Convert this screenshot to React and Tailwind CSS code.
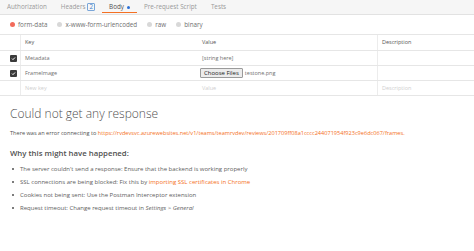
import React from "react";

const tabs = [
  { label: "Authorization" },
  { label: "Headers", count: "2" },
  { label: "Body", active: true },
  { label: "Pre-request Script" },
  { label: "Tests" },
];

const modes = ["form-data", "x-www-form-urlencoded", "raw", "binary"];

function Checkbox() {
  return (
    <span className="w-[7px] h-[7px] rounded-[1px] bg-[#3b3b3b] flex items-center justify-center">
      <svg viewBox="0 0 10 10" className="w-[5px] h-[5px]" fill="none" stroke="white" strokeWidth="2">
        <path d="M2 5.2l2 2L8 3" />
      </svg>
    </span>
  );
}

function Bullet({ children }) {
  return (
    <li className="flex items-center gap-[6px] leading-[8px]">
      <span className="w-[2px] h-[2px] rounded-full bg-[#505050] ml-[2px]" />
      <span>{children}</span>
    </li>
  );
}

export default function App() {
  const url =
    "https://rvdevsvc.azurewebsites.net/v1/teams/teamrvdev/reviews/201709ff08a1cccc244071954f923c9e6dc067/frames.";

  return (
    <div className="w-[474px] h-[251px] bg-white overflow-hidden text-[#505050]" style={{ fontFamily: '"Open Sans", sans-serif' }}>
      {/* tabs */}
      <div className="h-[15px] bg-[#f6f6f6] border-b border-[#e2e2e2] flex items-stretch pl-[7px] gap-[14px] text-[6.3px] text-[#9a9a9a]">
        {tabs.map((t) => (
          <div
            key={t.label}
            className={`relative flex items-center ${t.active ? "text-[#505050] px-[7px] -mx-[7px]" : ""}`}
          >
            {t.label}
            {t.count && (
              <span className="ml-[2px] px-[1px] border border-[#7aa6d9] rounded-[1px] text-[#3d7fc9] leading-none">{t.count}</span>
            )}
            {t.active && <span className="ml-[3px] w-[3px] h-[3px] rounded-full bg-[#2a6fd6]" />}
            {t.active && <span className="absolute left-0 right-0 bottom-[1px] h-[1.5px] bg-[#f47023]" />}
          </div>
        ))}
      </div>

      {/* body modes */}
      <div className="h-[20px] border-b border-[#e6e6e6] flex items-center pl-[10px] gap-[10px] text-[6.3px] text-[#707070]">
        {modes.map((m, i) => (
          <label key={m} className="flex items-center gap-[3px]">
            <span className={`w-[5px] h-[5px] rounded-full ${i === 0 ? "bg-[#f26b5b]" : "bg-[#d8d8d8]"}`} />
            {m}
          </label>
        ))}
      </div>

      {/* table */}
      <div className="text-[5.5px] text-[#707070]">
        <div className="grid grid-cols-[20px_178px_179px_1fr] h-[16px] border-b border-[#e6e6e6] items-center">
          <div />
          <div className="pl-[4px] border-l border-[#ececec] h-full flex items-center text-[#555]">Key</div>
          <div className="pl-[4px] h-full flex items-center text-[#555]">Value</div>
          <div className="pl-[4px] border-l border-[#ececec] h-full flex items-center text-[#555]">Description</div>
        </div>
        {[
          { k: "Metadata", v: "[string here]", check: true },
          { k: "FrameImage", file: true, check: true },
          { k: "New key", v: "Value", d: "Description", ph: true },
        ].map((r) => (
          <div key={r.k} className="grid grid-cols-[20px_178px_179px_1fr] h-[15px] border-b border-[#e6e6e6] items-center">
            <div className="flex justify-end pr-[3px]">{r.check && <Checkbox />}</div>
            <div className={`pl-[4px] border-l border-[#ececec] h-full flex items-center ${r.ph ? "text-[#cfcfcf]" : ""}`}>{r.k}</div>
            <div className={`pl-[2px] h-full flex items-center ${r.ph ? "text-[#cfcfcf]" : ""}`}>
              {r.file ? (
                <>
                  <span className="h-[10px] px-[3px] flex items-center border border-[#9a9a9a] rounded-[1px] bg-[#ececec] text-[#222] text-[6px]">
                    Choose Files
                  </span>
                  <span className="ml-[2px]">testone.png</span>
                </>
              ) : (
                <span className="pl-[2px]">{r.v}</span>
              )}
            </div>
            <div className="pl-[4px] border-l border-[#ececec] h-full flex items-center text-[#cfcfcf]">{r.d}</div>
          </div>
        ))}
      </div>

      {/* response error */}
      <div className="pl-[10px] pt-[10px]">
        <h1 className="text-[12px] font-light text-[#505050] leading-[16px]">Could not get any response</h1>
        <p className="mt-[7px] text-[5.6px] text-[#505050] whitespace-nowrap leading-[8px]">
          There was an error connecting to <span className="text-[#f47023]">{url}</span>
        </p>
        <h2 className="mt-[11px] text-[7.8px] font-semibold text-[#505050] leading-[10px]">Why this might have happened:</h2>
        <ul className="mt-[7px] text-[6px] text-[#606060] flex flex-col gap-[5px]">
          <Bullet>The server couldn't send a response: Ensure that the backend is working properly</Bullet>
          <Bullet>
            SSL connections are being blocked: Fix this by <span className="text-[#f47023]">importing SSL certificates in Chrome</span>
          </Bullet>
          <Bullet>Cookies not being sent: Use the Postman Interceptor extension</Bullet>
          <Bullet>
            Request timeout: Change request timeout in <i>Settings</i> &gt; <i>General</i>
          </Bullet>
        </ul>
      </div>
    </div>
  );
}
